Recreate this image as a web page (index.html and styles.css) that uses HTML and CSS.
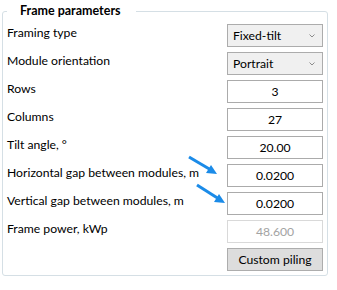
FILE: index.html
```html
<!DOCTYPE html>
<html lang="en">
<head>
    <meta charset="UTF-8">
    <title>Frame parameters</title>
    <link rel="stylesheet" href="styles.css">
</head>
<body>

<fieldset class="group">
    <legend>Frame parameters</legend>
    <div class="rows">
        <span class="label">Framing type</span>
        <div class="combo">Fixed-tilt
            <svg class="chev" width="6" height="4" viewBox="0 0 6 4"><path d="M0.5 0.5 L3 3 L5.5 0.5" fill="none" stroke="#8c8c8c" stroke-width="1"/></svg>
        </div>

        <span class="label">Module orientation</span>
        <div class="combo">Portrait
            <svg class="chev" width="6" height="4" viewBox="0 0 6 4"><path d="M0.5 0.5 L3 3 L5.5 0.5" fill="none" stroke="#8c8c8c" stroke-width="1"/></svg>
        </div>

        <span class="label">Rows</span>
        <div class="field">3</div>

        <span class="label">Columns</span>
        <div class="field">27</div>

        <span class="label">Tilt angle, °</span>
        <div class="field">20.00</div>

        <span class="label">Horizontal gap between modules, m</span>
        <div class="field">0.0200</div>

        <span class="label">Vertical gap between modules, m</span>
        <div class="field">0.0200</div>

        <span class="label">Frame power, kWp</span>
        <div class="field disabled">48.600</div>

        <span></span>
        <div class="button">Custom piling</div>
    </div>
</fieldset>

<!-- annotation arrows drawn over the form -->
<svg class="arrows" width="337" height="290" viewBox="0 0 337 290">
    <line x1="189" y1="157" x2="211" y2="170" stroke="#1b8be8" stroke-width="3"/>
    <polygon points="217,174 206,173 211,165" fill="#1b8be8"/>
    <line x1="197" y1="185" x2="219" y2="199" stroke="#1b8be8" stroke-width="3"/>
    <polygon points="225,203 214,202 219,194" fill="#1b8be8"/>
</svg>

</body>
</html>
```

FILE: styles.css
```css
* {
    box-sizing: border-box;
}

body {
    margin: 0;
    width: 337px;
    height: 290px;
    background-color: #fff;
    font-family: Lato, "Noto Sans", sans-serif;
    font-size: 12.2px;
    color: #000;
    position: relative;
}

.group {
    margin: 1px 0 0 2px;
    width: 326px;
    padding: 3px 4px 4px 4px;
    border: 1px solid #d5dfe5;
    border-radius: 3px;
}

.group legend {
    padding: 0 15px 0 13px;
    font-size: 12.5px;
    font-weight: bold;
    line-height: 20px;
}

.rows {
    display: grid;
    grid-template-columns: 1fr 96px;
    row-gap: 5px;
}

.label {
    line-height: 18px;
    white-space: nowrap;
}

.combo,
.field,
.button {
    height: 23px;
    line-height: 21px;
    border: 1px solid #acacac;
}

.combo {
    display: flex;
    justify-content: space-between;
    align-items: center;
    padding: 0 7px 0 5px;
    background-color: #f0f0f0;
}

.field {
    text-align: center;
    background-color: #fff;
    border-color: #ababab;
}

.field.disabled {
    color: #a3a3a3;
    border-color: #d9d9d9;
}

.button {
    text-align: center;
    background-color: #dddddd;
    border-color: #adadad;
}

.arrows {
    position: absolute;
    left: 0;
    top: 0;
    pointer-events: none;
}
```
